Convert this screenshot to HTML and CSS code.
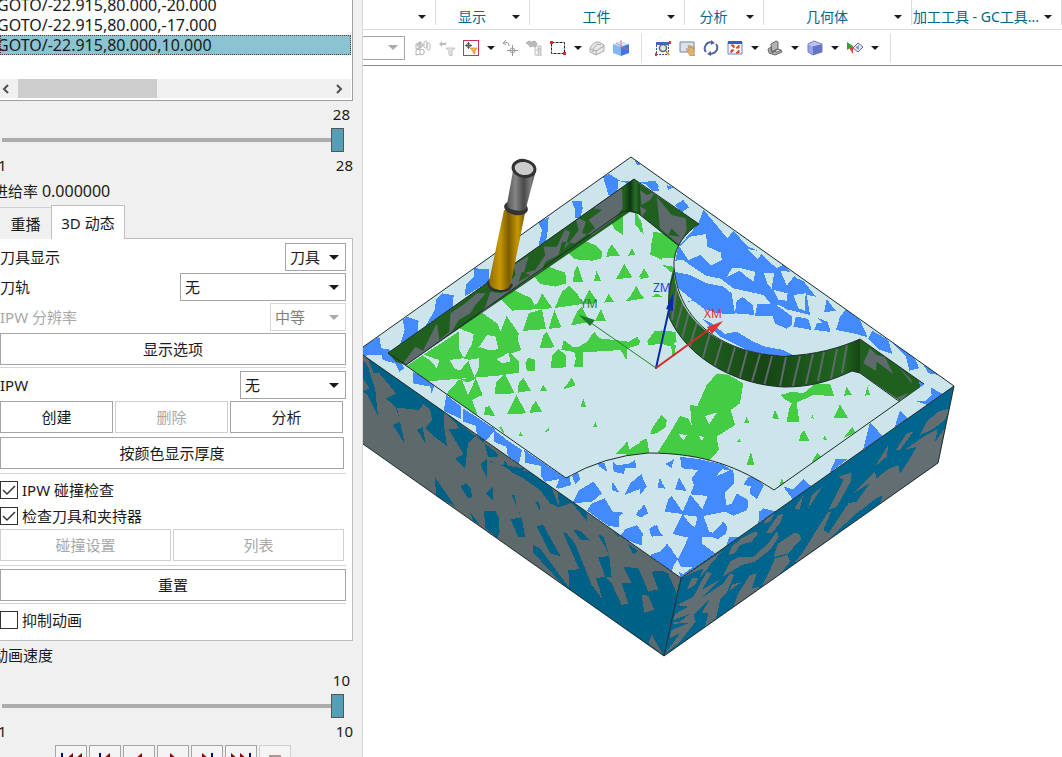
FILE: index.html
```
<!DOCTYPE html>
<html lang="zh-CN">
<head>
    <meta charset="UTF-8">
    <meta name="viewport" content="width=device-width, initial-scale=1.0">
    <title>刀轨可视化</title>
    <link rel="stylesheet" href="styles.css">
</head>
<body>

    <!-- Tool path panel -->
    <aside class="panel">
        <div class="path-box">
            <ul class="path-list">
                <li>GOTO/-22.915,80.000,-20.000</li>
                <li>GOTO/-22.915,80.000,-17.000</li>
                <li class="selected">GOTO/-22.915,80.000,10.000</li>
            </ul>
            <div class="scrollbar">
                <button class="scroll-arrow" aria-label="向左"><svg width="8" height="10" viewBox="0 0 8 10"><path d="M6 1L2 5l4 4"/></svg></button>
                <div class="scroll-track"><div class="scroll-thumb"></div></div>
                <button class="scroll-arrow" aria-label="向右"><svg width="8" height="10" viewBox="0 0 8 10"><path d="M2 1l4 4-4 4"/></svg></button>
            </div>
        </div>

        <div class="slider-block">
            <output class="slider-value">28</output>
            <input type="range" min="1" max="28" value="28" aria-label="运动">
            <div class="slider-ends"><span>1</span><span>28</span></div>
        </div>

        <p class="feed">进给率 <span class="num">0.000000</span></p>

        <div class="tabs">
            <button class="tab">重播</button>
            <button class="tab active">3D 动态</button>
        </div>

        <div class="pane">
            <div class="row">
                <label for="toolShow">刀具显示</label>
                <select id="toolShow" class="w-small"><option>刀具</option></select>
            </div>
            <div class="row">
                <label for="path">刀轨</label>
                <select id="path" class="w-large"><option>无</option></select>
            </div>
            <div class="row disabled">
                <label for="res">IPW 分辨率</label>
                <select id="res" class="w-res" disabled><option>中等</option></select>
            </div>
            <button class="btn">显示选项</button>
            <hr class="tight">
            <div class="row">
                <label for="ipw">IPW</label>
                <select id="ipw" class="w-medium"><option>无</option></select>
            </div>
            <div class="btn-row three">
                <button class="btn">创建</button>
                <button class="btn" disabled>删除</button>
                <button class="btn">分析</button>
            </div>
            <div class="btn-row thick">
                <button class="btn">按颜色显示厚度</button>
            </div>
            <hr>
            <label class="check"><input type="checkbox" checked>IPW 碰撞检查</label>
            <label class="check"><input type="checkbox" checked>检查刀具和夹持器</label>
            <div class="btn-row">
                <button class="btn" disabled>碰撞设置</button>
                <button class="btn" disabled>列表</button>
            </div>
            <hr>
            <button class="btn">重置</button>
            <hr class="tight">
            <label class="check"><input type="checkbox">抑制动画</label>
        </div>

        <p class="speed">动画速度</p>
        <div class="slider-block">
            <output class="slider-value">10</output>
            <input type="range" min="1" max="10" value="10" aria-label="动画速度">
            <div class="slider-ends"><span>1</span><span>10</span></div>
        </div>

        <div class="player">
            <button aria-label="到开头"><svg viewBox="0 0 30 26"><path class="bar" d="M5 7h2v12H5z"/><path d="M17 7v12l-7-6zM26 7v12l-7-6z"/></svg></button>
            <button aria-label="上一步"><svg viewBox="0 0 30 26"><path class="bar" d="M9 7h2v12H9z"/><path d="M20 7v12l-7-6z"/></svg></button>
            <button aria-label="反向播放"><svg viewBox="0 0 30 26"><path d="M18 7v12l-7-6z"/></svg></button>
            <button aria-label="播放"><svg viewBox="0 0 30 26"><path d="M12 7v12l7-6z"/></svg></button>
            <button aria-label="下一步"><svg viewBox="0 0 30 26"><path d="M10 7v12l7-6z"/><path class="bar" d="M19 7h2v12h-2z"/></svg></button>
            <button aria-label="到末尾"><svg viewBox="0 0 30 26"><path d="M5 7v12l7-6zM14 7v12l7-6z"/><path class="bar" d="M23 7h2v12h-2z"/></svg></button>
            <button aria-label="停止" disabled><svg viewBox="0 0 30 26"><path d="M9 9h12v10H9z"/></svg></button>
        </div>
    </aside>

    <main class="work">
        <!-- Ribbon group captions -->
        <nav class="ribbon">
            <div class="group g-first"><span></span><button class="drop" aria-label="更多"></button></div>
            <div class="group g-show"><span>显示</span><button class="drop" aria-label="显示"></button></div>
            <div class="group g-part"><span>工件</span><button class="drop" aria-label="工件"></button></div>
            <div class="group g-analyse"><span>分析</span><button class="drop" aria-label="分析"></button></div>
            <div class="group g-body"><span>几何体</span><button class="drop" aria-label="几何体"></button></div>
            <div class="group g-tools"><span>加工工具 - GC工具...</span><button class="drop" aria-label="加工工具"></button></div>
        </nav>

        <div class="toolbar">
            <select class="combo" aria-label="过滤器" disabled><option></option></select>
            <div class="tools narrow">
                <button class="tool" aria-label="装配"><svg viewBox="0 0 16 16" fill="none" stroke="#b4b4b4"><path d="M1 4l4-1v5L1 9zM1 10l4-1v5l-4 1zM5 9l4 1v4l-4 1M5 1v7M2 5h7"/><circle cx="5" cy="5" r="2.5"/><rect x="9" y="1" width="3" height="7" rx="1.5"/><rect x="12" y="3" width="3" height="7" rx="1.5"/></svg></button>
                <button class="tool" aria-label="重置过滤"><svg viewBox="0 0 16 16"><path d="M3 1L0 4l3 3V5h3q2 0 1-3l-1 1H3z" fill="#bbb"/><path d="M7 8h9l-3 3v5l-3-1v-4z" fill="#e2e2e2" stroke="#c4c4c4"/></svg></button>
                <button class="tool pressed" aria-label="选择过滤"><svg viewBox="0 0 16 16"><g fill="none" stroke="#555"><circle cx="5.500" cy="5.500" r="2"/><path d="M5.500 2v7M2 5.500h7"/></g><path d="M5 5h1v1H5z" fill="#d33"/><path d="M7 8h7l-2 3v3l-2-1v-2z" fill="#f3b83b" stroke="#c08a20" stroke-width=".6"/></svg></button>
                <button class="drop" aria-label="过滤选项"></button>
                <button class="tool" aria-label="移动"><svg viewBox="0 0 16 16" fill="none" stroke="#999"><path d="M7 6q0-5-5-3M4 0L1 3l3 2"/><circle cx="10.500" cy="10.500" r="2.500"/><path d="M10.500 5v11M5 10.500h11"/></svg></button>
                <button class="tool" aria-label="查找"><svg viewBox="0 0 16 16"><path d="M0 3l3-2 2 1 4-1 2 3-1 3-3-1-3 1-1-2z" fill="#bbb" stroke="#999" stroke-width=".6"/><path d="M9 7v8h3M9 10h3" fill="none" stroke="#bbb"/><path d="M12 6h3v3h-3zM12 9h3v3h-3zM12 13h3v3h-3z" fill="#eee" stroke="#bbb"/></svg></button>
                <button class="tool" aria-label="框选"><svg viewBox="0 0 16 16"><path d="M1.500 2.500h13v11h-13z" fill="none" stroke="#222" stroke-dasharray="3 1"/><path d="M0 1h3v3H0zM13 12h3v3h-3z" fill="#d42a2a"/></svg></button>
                <button class="drop" aria-label="选择方式"></button>
                <button class="tool" aria-label="高亮"><svg viewBox="0 0 16 16" fill="#e8e8e8" stroke="#aaa"><path d="M1 8q4-7 9-6l5 3v6l-8 4-6-3z"/><path d="M1 9l6 2 8-5M7 11v4M4 12V9l4-5 4 1" fill="none"/></svg></button>
                <button class="tool" aria-label="着色"><svg viewBox="0 0 16 16"><path d="M0 4l8 2v10l-8-3z" fill="#7fb8f4"/><path d="M8 6l8-2v9l-8 3z" fill="#3b76e1"/><path d="M0 4l8-3 8 3-8 3z" fill="#cfe4fb"/><path d="M8 0v10M3 3l12 7" stroke="#d8708a" stroke-width=".8" fill="none"/></svg></button>
            </div>
            <div class="tools">
                <button class="tool" aria-label="缩放窗口"><svg viewBox="0 0 16 16"><path d="M1 2h13v3H1z" fill="#4662c4"/><path d="M1.500 5v9.500h12V5" fill="none" stroke="#3c50b0" stroke-dasharray="2 1"/><circle cx="8" cy="8" r="3.500" fill="#dbe9ee" stroke="#56656d" stroke-width="1.500"/><path d="M11 11l3 4" stroke="#c49745" stroke-width="2"/><path d="M14 1h2v3h-2zM0 13h2v3H0z" fill="#d33"/></svg></button>
                <button class="tool" aria-label="平移"><svg viewBox="0 0 16 16"><path d="M1 2h14v10H1z" fill="#dbe3ef" stroke="#7583a0"/><path d="M7 8l3 2-1-5 2 3V5l1 3 1-2 1 3 1-2v6l1 3h-5z" fill="#dfb46e" stroke="#b17e3d" stroke-width=".5"/></svg></button>
                <button class="tool" aria-label="旋转"><svg viewBox="0 0 16 16" fill="none" stroke="#53659e" stroke-width="2"><path d="M3 12a6 6 0 0 1 6-9.500M13 4a6 6 0 0 1-6 9.500"/><path d="M8 0l4 3-4 2zM8 11l-4 3 4 2z" fill="#53659e" stroke="none"/></svg></button>
                <button class="tool" aria-label="布局"><svg viewBox="0 0 16 16"><path d="M1 2h14v12H1z" fill="#f5f7ff" stroke="#7181c8"/><path d="M1 1h14v3H1z" fill="#3e5ac8"/><path d="M4 5h3v3zM12 5v3H9zM4 13v-3h3zM12 13H9l3-3z" fill="#e14825" stroke="#e14825"/></svg></button>
                <button class="drop" aria-label="布局选项"></button>
                <button class="tool" aria-label="截面"><svg viewBox="0 0 16 16" fill="#b4b4b4" stroke="#666"><path d="M4 4l5-3 2 1v7l-6 4zM1 9l3-2v4l6 1 4-2 1 2-7 3-6-2z"/><path d="M5 12l5-3 4 1" fill="none"/></svg></button>
                <button class="drop" aria-label="截面选项"></button>
                <button class="tool" aria-label="视图方向"><svg viewBox="0 0 16 16"><path d="M1 4l5 2v9l-5-3z" fill="#98a6e9"/><path d="M6 6l9-2v8l-9 3z" fill="#6375c9"/><path d="M1 4l6-3 8 3-9 2z" fill="#b9c4f4"/><path d="M1 4l6-3 8 3v8l-9 3-5-3z" fill="none" stroke="#7181c8"/></svg></button>
                <button class="drop" aria-label="视图选项"></button>
                <button class="tool" aria-label="显示方式"><svg viewBox="0 0 16 16"><path d="M0 2l6 4-6 4z" fill="#26a53b"/><path d="M2 8l4-2v8z" fill="#e3462f"/><path d="M6 8l5-5 5 4-5 5z" fill="#e5eaf5" stroke="#667" /><path d="M9 7l3-2v5l-3-2z" fill="#8795d6"/></svg></button>
                <button class="drop" aria-label="显示选项"></button>
            </div>
        </div>

        <!-- Machined part -->
        <div class="view">
            <svg class="scene" viewBox="363 66 699 691" preserveAspectRatio="xMinYMin meet" role="img" aria-label="零件三维视图">
                <defs>
                    <clipPath id="cTop"><path d="M363 347L631 157 954 386 681 578 363 355z"/></clipPath>
                    <clipPath id="cFloor"><path d="M388 353L634 179 699 224 680 245 674 267 676 340 700 372 852 386 924 384 774 490C740 468 706 453 648 453Q604 456 566 478z"/></clipPath>
                    <clipPath id="cLeft"><path d="M363 355L681 578 664 656 363 444z"/></clipPath>
                    <clipPath id="cRight"><path d="M681 578L954 386 938 463 664 656z"/></clipPath>
                    <clipPath id="cWall"><path d="M388 353L631 181V211L406 365 396 362z"/></clipPath>
                    <clipPath id="cWall2"><path d="M633 179L699 224Q685 234 679 246L639 214 630 212z"/></clipPath>
                    <clipPath id="cBoss"><path d="M699 224C680 236 673 253 674 273C679 330 735 355 785 356C815 355 840 348 860 339L924 384 954 386 640 163z"/></clipPath>
                    <clipPath id="cBossWall"><path d="M674 267C679 330 735 355 785 356C815 355 840 348 860 339V373L852 371C828 382 810 387 784 387C738 385 688 360 669 317Q666 290 674 267z"/></clipPath>
                    <linearGradient id="gTool"><stop offset="0" stop-color="#8f6b00"/><stop offset=".3" stop-color="#c79800"/><stop offset=".55" stop-color="#7c5d00"/><stop offset=".8" stop-color="#c79800"/><stop offset="1" stop-color="#765800"/></linearGradient>
                    <linearGradient id="gShank"><stop offset="0" stop-color="#555"/><stop offset=".3" stop-color="#858585"/><stop offset=".6" stop-color="#4a4a4a"/><stop offset=".85" stop-color="#7d7d7d"/><stop offset="1" stop-color="#555"/></linearGradient>
                    <linearGradient id="gBoss"><stop offset="0" stop-color="#267025"/><stop offset=".5" stop-color="#174515"/><stop offset=".9" stop-color="#206620"/><stop offset="1" stop-color="#123b11"/></linearGradient>
                    <linearGradient id="gCorner"><stop offset="0" stop-color="#206020"/><stop offset=".4" stop-color="#103510"/><stop offset=".7" stop-color="#287028"/><stop offset="1" stop-color="#174817"/></linearGradient>
                </defs>

                <!-- left side -->
                <g clip-path="url(#cLeft)" class="flat">
                    <path class="side" d="M363 355L681 578 664 656 363 444z"/>
                    <path class="teal" transform="translate(362 340) scale(.3333)" d="M3 60L18 80 32 125 40 150 48 228 15 162 3 155 22 145 3 115z
                        M3 45L248 215 245 250 255 318 215 288 190 265 210 240 205 210 185 192 170 210 105 203 128 310 92 255 115 245 100 200 72 175 102 160 50 97 35 100 20 62z
                        M165 270L182 262 192 312z M248 215L408 342 406 352 378 352 365 298 340 290 318 310 310 385 280 356 305 343 260 268 302 264 308 280z
                        M355 372L375 357 376 416z M425 360L440 378 485 385 485 452 450 430 425 388z
                        M219 412L278 497 222 470z M296 440L310 430 325 443 332 472 318 474z M372 460L392 442 393 480z
                        M366 513L400 513 421 550 406 595 370 565z M323 515L352 552 335 545z"/>
                    <path class="teal" transform="translate(500 480) scale(.3333)" d="M60 175L130 100 540 297 495 530 208 335z"/>
                    <path class="side" transform="translate(500 480) scale(.3333)" d="M0 180L-10 -30 100 -30 130 0 262 100 340 155 420 210 500 272 455 275 475 328 445 335 415 265 370 260 395 310 365 310 385 370 365 375 335 310 315 290 288 295 308 358 275 315 225 190 200 160 190 160 238 268 205 270 160 190 130 135 110 138 150 220 185 230 205 270 208 325 120 205 100 195 100 235 60 180z"/>
                    <path class="teal" transform="translate(500 480) scale(.3333)" d="M-40 -60L100 -20 130 0 190 38 262 100 262 125 215 68 178 82 150 70 120 30 70 -5z M32 118L65 112 75 172 55 172z M105 65L118 68 120 92z M35 45L45 45 48 72 65 112z M220 150L240 152 272 182 240 178z M295 232L328 228 335 290 315 290z M295 165L310 168 328 228 318 205z M340 155L360 168 355 172z M385 193L415 212 400 223z"/>
                    <path class="side" transform="translate(500 480) scale(.3333)" d="M165 50L178 82 172 28 155 25z M425 345L445 347 463 390 433 398z M455 465L490 525 445 490z M500 270L540 297 530 340z M-20 -60L30 -30 50 0 -20 0z"/>
                </g>

                <!-- right side -->
                <g clip-path="url(#cRight)" class="flat">
                    <path class="teal2" d="M681 578L954 386 938 463 664 656z"/>
                    <path class="side2" transform="translate(640 370) scale(.3333)" d="M860 155L895 125 930 115 915 150 875 180 840 195z
                        M795 240L850 200 893 178 885 215 925 160 896 278 720 400 728 375 705 388 650 430 590 485 545 535 462 580 490 545 530 480 565 425 573 425 550 480 565 490 625 400 650 395 690 340 680 345 640 370 690 320 705 305 710 325 740 300 775 285 780 312 810 265 830 230z
                        M768 240L800 190 820 185 780 240z M705 290L745 225 740 260z M595 320L635 308 632 335 590 410 565 420 610 330z
                        M513 380L550 345 505 415z M463 415L490 375 478 420z"/>
                    <path class="side2" transform="translate(660 490) scale(.3333)" d="M65 265L185 185 150 225 140 240 120 262 130 235 90 252z M205 195L215 170 245 145 285 125 295 130 275 155 240 165 225 190z M310 100L320 85 345 70 330 95z
                        M188 260L210 215 240 200 280 200 325 160 350 125 357 140 330 180 285 215 245 225z M355 75L370 72 360 100 335 130 318 130 330 110z
                        M342 195L355 160 400 130 415 130 425 145 385 190 345 200z M300 300L330 240 345 205 382 195 390 215 365 247z
                        M220 350L235 310 270 255 290 250 275 295 300 290 290 305z M207 303L215 285 247 275z M80 300L95 265 115 265 105 285z
                        M50 345L100 320 140 245 155 250 125 300 180 268 130 320 190 280 210 250 222 255 200 310 182 325 168 385 135 410 145 370 125 370 150 325 100 375 107 395 60 455 15 492 60 430 28 445 35 420 90 398 35 402 95 370 40 390 45 372 85 350z"/>
                    <path class="teal2" transform="translate(660 490) scale(.3333)" d="M38 398L90 370 60 395z"/>
                </g>

                <!-- top face -->
                <g clip-path="url(#cTop)" class="flat">
                    <path class="face" d="M363 347L631 157 954 386 681 578 363 355z"/>
                    <path class="blue" transform="translate(362 150) scale(.3333)" d="M3 590L52 560 58 595 82 598 92 615 118 640 128 655 112 665 100 640 62 630 60 615 3 617z
                        M112 590L128 540 122 510 135 500 170 512 165 565 130 595z M190 530L218 480 222 450 240 430 275 436 272 475 245 500 215 510z
                        M308 440L312 405 335 380 335 355 382 357 380 395z M528 215L560 202 556 255 550 280 530 285 540 240z M628 152L660 153 662 175 655 205 640 205 640 180z
                        M723 80L742 72 768 88 766 130 740 137z M817 27L840 42 825 46z M762 90L830 98 880 92 892 112 868 116 872 102 790 98z M152 665L190 685 220 700 208 732 205 710 152 700z"/>
                    <path class="blue" transform="translate(362 340) scale(.3333)" d="M253 165L298 200 298 238 245 212z M303 205L400 268 375 300 345 295 342 258 303 245z
                        M397 270L435 300 480 330 470 375 437 345 433 320 395 305z M487 330L610 414 550 425 537 410 537 378 490 368z
                        M582 442L595 412 612 410 620 400 628 435 590 446z M630 408L648 397 655 418 640 432z M630 490L652 450 695 425 720 460 690 485z
                        M675 512L690 490 728 475 752 515 785 518 770 530 772 562 740 558z M700 362L728 370 736 395 712 380z M752 362L765 375 800 372 820 360 822 385 790 385 785 402 755 395z
                        M787 465L805 430 838 402 853 440z M752 425L772 458 750 450z M822 525L830 510 842 510 845 492 858 520 838 532z M773 590L790 568 825 555 842 580 840 617 812 607z
                        M863 582L868 562 885 556 900 588z M887 442L893 415 910 446z M910 510L918 480 930 468 930 518z M865 648L890 640 915 612 930 628 930 695z M910 372L930 362 930 384z"/>
                    <path class="blue" transform="translate(640 370) scale(.3333)" d="M0 312L20 350 0 375z M52 352L60 325 75 356z M105 358L117 322 140 363z M80 285L102 267 95 292z
                        M120 260L180 268 245 283 280 302 283 340 255 368 258 405 275 402 290 370 325 390 322 420 280 437 255 425 190 438 208 485 218 488 250 455 262 470 258 492 232 508 215 500 185 500 185 520 225 550 120 625 113 570 145 503 98 492 128 432 75 425 95 378 128 425 150 375 162 345 155 325 175 300 125 295z
                        M30 555L60 545 82 522 118 572 95 600 70 570z M28 478L45 465 68 497 35 500z M0 420L12 402 25 430 0 442z M310 345L325 320 345 322 372 345 350 388 330 370 332 348z
                        M355 458L358 425 370 415 408 425z M430 350L460 358 490 328 516 350 460 390z M568 310L587 267 622 268z M670 238L690 157 728 198z M763 175L780 122 805 145z M822 92L858 92 875 75 872 52 908 72 862 105z M258 528L268 500 300 500z M395 350L412 350 403 360z"/>
                    <path class="face" transform="translate(640 370) scale(.3333)" d="M150 373L203 378 187 417z M130 435L173 440 165 472 148 460z M228 320L245 298 270 300z M100 590L112 568 122 590 160 590 130 612 100 600z"/>
                </g>

                <!-- pocket floor -->
                <g clip-path="url(#cFloor)" class="flat">
                    <path class="face" d="M380 170h560v330H380z"/>
                    <path class="green" transform="translate(362 150) scale(.3333)" d="M610 300L655 268 700 285 722 305 718 325 690 332 640 328z M733 320L738 300 750 283 774 318z M798 317L810 293 821 315z
                        M742 208L775 192 783 195 782 255 758 238z M820 185L838 215 845 252 820 225z M865 312L870 265 900 248 900 330z
                        M515 378L545 345 610 368 613 400 580 410 535 402z M632 395L638 362 646 345 664 396z M696 392L704 362 717 392z M762 388L787 342 811 382z M831 382L846 354 862 382z
                        M413 445L450 417 508 445 518 465 528 458 540 430 572 475 450 482z M578 474L600 425 622 407 645 430 662 462z M662 460L682 418 706 455 690 462z M726 458L740 431 755 455z
                        M788 455L805 438 823 408 835 430 848 445z M870 440L885 430 900 440z M483 543L500 490 540 478 552 537z M560 537L577 480 598 532z M626 527L645 485 660 470 683 515z M700 512L717 477 731 512z
                        M532 595L545 555 555 545 578 592z M133 648L290 545 310 488 360 488 408 522 415 545 434 498 470 550 468 570 478 600 448 610 472 635 472 668 400 678 345 682 200 694z
                        M490 640L500 622 518 630 518 662 495 662z M567 655L570 615 590 598 612 615 612 652z M598 600L605 570 632 590 650 590 675 575 697 545 712 565 800 575 825 560 835 575 830 585 780 600 650 608z
                        M635 652L642 625 635 600 662 605 663 652z M775 598L797 595 793 632z M856 575L870 555 900 540 900 582 860 585z"/>
                    <path class="face" transform="translate(362 150) scale(.3333)" d="M290 535L335 552 330 582 306 625 292 600z M262 630L303 625 322 630 295 660 280 658z M318 630L350 625 352 650 338 682z M345 600L375 555 400 560 410 598 380 600 350 590z M405 628L440 608 445 635 420 640z M170 608L215 625 232 630 225 655 205 632z"/>
                    <path class="green" transform="translate(362 340) scale(.3333)" d="M250 165L290 120 340 110 362 165 330 180 348 228 300 195z M398 163L402 128 428 100 458 160z M467 158L470 130 485 115 507 152z M535 152L543 134 555 152z M603 148L618 130 628 112 642 136z
                        M435 223L463 165 493 220z M503 218L510 198 521 183 541 216z M366 225L370 202 382 198 400 228z M410 260L420 262 430 288z M656 200L664 176 673 200z M692 262L700 246 706 260z M545 278L562 260 562 272z M470 287L475 276 483 287z
                        M865 280L872 262 898 225 915 240 908 265z M760 342L796 305 802 328 855 295 862 338 820 345z M887 340L930 275 930 342z"/>
                    <path class="face" transform="translate(362 340) scale(.3333)" d="M300 120L318 128 342 115 318 165z"/>
                    <path class="green" transform="translate(640 370) scale(.3333)" d="M50 252L80 205 120 138 145 145 155 165 150 105 172 108 200 45 240 0 310 40 300 100 272 120 285 165 230 200 237 240 205 273 130 258z
                        M30 192L40 170 65 138 80 150 78 170 50 190z M0 215L18 205 25 248 0 246z M396 145L405 118 417 147z M313 158L320 140 327 158z
                        M440 155L448 115 455 100 430 85 422 75 455 65 490 70 525 42 570 42 583 78 520 75 470 98 478 155z M582 143L600 103 624 143z M477 213L482 192 493 182 508 212z M548 208L554 197 562 210z
                        M612 77L620 50 636 75z M675 77L683 50 690 75z M513 145L517 135 522 146z M320 285L333 245 343 285z M515 278L532 247 545 262z M610 205L637 170 645 187z M418 348L425 325 434 345z M660 5L690 25 706 40 685 48z M292 215L300 205 302 216z"/>
                    <path class="face" transform="translate(640 370) scale(.3333)" d="M195 138L232 127 208 162z M115 192L143 195 130 210z M177 199L195 200 185 212z"/>
                    <path class="green" transform="translate(640 150) scale(.3333)" d="M30 315L35 288 40 245 80 252 118 290 110 325 60 325z M0 387L12 355 28 382z M0 205L10 250 0 245z M20 575L45 542 105 545 122 565 90 590 60 580z M93 580L107 585 105 620 96 615z M68 345L100 350 98 370z"/>
                </g>
                <path class="edge" d="M388 353L566 478Q604 456 648 453C706 453 740 468 774 490L924 384"/>

                <!-- pocket walls -->
                <g clip-path="url(#cWall)">
                    <path class="wall" d="M380 170h260v200H380z"/>
                    <path class="stone" transform="translate(362 150) scale(.3333)" d="M120 645L160 590 183 602 225 520 232 570 262 545 265 490 310 460 345 430 372 430 340 465 325 490 290 510 270 545 205 600 140 650z
                        M325 525L370 470 385 425 420 430 460 375 455 345 500 318 485 370 520 360 550 315 545 290 585 290 608 240 625 245 605 300 650 240 640 200 672 215 660 250 690 255 760 205 782 175 780 115 728 135 695 175 720 180 680 210 700 235 640 280 600 275 590 315 550 335 540 360 450 420 400 455z"/>
                    <path class="wall" transform="translate(362 150) scale(.3333)" d="M490 365L520 310 535 320 512 355z M560 335L605 305 590 325z M470 395L480 365 505 375z"/>
                </g>
                <g clip-path="url(#cWall2)">
                    <path class="wall" d="M625 175h80v75h-80z"/>
                    <path class="stone" transform="translate(640 150) scale(.3333)" d="M0 120L20 135 45 125 30 150 5 165z M50 140L95 195 138 205 140 240 118 285 60 235z M0 170L20 180 5 200z"/>
                    <path class="wall" transform="translate(640 150) scale(.3333)" d="M85 255L95 235 120 260z"/>
                </g>
                <path fill="url(#gCorner)" d="M626 184L634 179 640 184V214L631 211 624 212z"/>
                <path class="wall" d="M860 339L924 384Q914 391 900 401L860 373z"/>
                <path class="stone" transform="translate(640 150) scale(.3333)" d="M670 640L690 595 710 615 735 622 760 672 710 635 708 662z M768 745L805 728 785 750z M775 650L815 690 815 700z"/>
                <g clip-path="url(#cBossWall)">
                    <path fill="url(#gBoss)" d="M664 260h200v130H664z"/>
                    <path class="rib" d="M677 288l-5 32M683 302l-7 26M689 312l-7 26M697 322l-8 27M710 333l-8 28M722 341l-8 27M735 347l-8 28M747 351l-8 30M760 354l-9 31M772 356l-8 30M786 357l-6 30M800 356l-7 30M813 354l-7 30M824 352l-6 29M837 349l-6 30M847 345l-5 28"/>
                </g>
                <g clip-path="url(#cBoss)" class="flat">
                    <path class="face" d="M670 165h290v230H670z"/>
                    <path class="blue" transform="translate(640 150) scale(.3333)" d="M190 178L262 265 280 243 325 290 350 300 410 355 430 345 470 385 490 393 528 440 500 435 510 495 440 478 418 465 400 468 370 435 280 415 240 385 200 378 150 345 130 330 106 332 115 290 175 222z
                        M103 365L150 375 200 400 250 410 275 430 285 492 230 490 190 475 160 452 130 460 158 450 115 415z M285 490L290 452 308 441 338 465 343 495z M345 497L352 463 400 460 430 480 457 500 455 525 440 537 405 520 398 498z
                        M460 530L468 500 505 507 515 540z M523 540L530 520 545 518 535 505 562 515 572 546z M588 540L600 500 618 478 660 510 683 562 640 550z M552 487L560 447 587 482z
                        M190 508L215 520 240 540 255 552 290 545 340 575 375 590 430 600 460 615 400 615 330 605 240 560z M697 542L745 570 757 612 720 600 685 565z M757 578L820 615 838 655 808 662 798 620z M848 640L898 675 865 670z"/>
                    <path class="face" transform="translate(640 150) scale(.3333)" d="M118 290L150 260 198 252 202 290 243 308 245 330 212 347 182 315 145 330z M262 380L275 355 300 354 345 365 342 395 320 380 298 362z M372 370L402 370 395 417 382 400z M422 363L472 367 440 407z M400 420L443 430 440 452 415 450z M460 435L497 430 494 482 475 475z M325 298L370 305 352 328z"/>
                </g>
                <path class="blue flat" transform="translate(640 150) scale(.3333)" d="M105 165L130 150 147 172 125 187z M12 97L45 92 57 122 35 122z M80 105L100 112 85 120z M835 690L853 702 842 712z"/>

                <!-- model edges -->
                <path class="edge" d="M363 347L631 157 954 386 938 463 664 656 363 444M363 355L681 578 954 386M681 578L664 656"/>
                <path class="edge" d="M406 365L388 353 634 179 699 224C680 236 673 253 674 267C679 330 735 355 785 356C815 355 840 348 860 339L924 384M406 365L622 212Q631 209 639 214L679 246M674 273Q667 290 669 317C688 360 738 385 784 387C810 387 828 382 852 371L860 373 900 402"/>

                <!-- cutting tool -->
                <g class="cutter">
                    <ellipse cx="499.500" cy="284" rx="12" ry="7" transform="rotate(10 499.500 284)" fill="#333"/>
                    <path fill="url(#gTool)" d="M504 210L525 213 511 283Q509 291 499 290 489 288 489 282z"/>
                    <path class="ring" d="M488 281Q488 291 499 291 510 292 512 284"/>
                    <ellipse cx="516" cy="208" rx="12" ry="7" transform="rotate(10 516 208)" fill="#333"/>
                    <path fill="url(#gShank)" d="M513 171L535 174 526 208Q524 212 514 210 507 209 507 204z"/>
                    <ellipse class="cap" cx="524" cy="168.500" rx="11" ry="8" transform="rotate(10 524 168.500)"/>
                </g>

                <!-- machine axes -->
                <g class="axes">
                    <path d="M656 368L581 316" stroke="#238523"/>
                    <path d="M579 315L595 320 590 326z" fill="#1b7a28"/>
                    <path d="M656 368L670 305" stroke="#0b2aa8" stroke-width="2"/>
                    <path d="M673 293L673 311 666 309z" fill="#0b2aa8"/>
                    <path d="M656 368L711 328" stroke="#d82828" stroke-width="2"/>
                    <path d="M723 321L712 334 707 327z" fill="#e03434"/>
                    <text x="580" y="308" fill="#2e7a3a">YM</text>
                    <text x="653" y="292" fill="#1c44e0">ZM</text>
                    <text x="704" y="318" fill="#e02f3a">XM</text>
                </g>
            </svg>
        </div>
    </main>

</body>
</html>
```
FILE: styles.css
```
* {
    box-sizing: border-box;
}

body {
    margin: 0;
    height: 100vh;
    display: flex;
    overflow: hidden;
    background: #fff;
    color: #1a1a1a;
    font-family: "Noto Sans", "Noto Sans CJK SC", sans-serif;
    font-size: 15px;
    line-height: 20px;
}

button, select, input {
    font: inherit;
    color: inherit;
    margin: 0;
}

p, ul {
    margin: 0;
    padding: 0;
    list-style: none;
}

/* Left panel */
.panel {
    flex: 0 0 363px;
    height: 100vh;
    padding-right: 9px;
    overflow: hidden;
    background: #f0f0f0;
    border-right: 1px solid #d8d8d8;
}

.path-box {
    height: 101px;
    overflow: hidden;
    display: flex;
    flex-direction: column;
    justify-content: flex-end;
    background: #fff;
    border-right: 1px solid #a0a0a0;
    border-bottom: 1px solid #a0a0a0;
    padding: 0 1px 2px 0;
}

.path-list {
    flex-shrink: 0;
    padding-bottom: 24px;
    font-size: 16px;
    text-indent: -3px;
    white-space: nowrap;
}

.path-list .selected {
    background: #8bc3d1;
    outline: 1px dotted #5a3a2c;
    outline-offset: -1px;
}

.scrollbar {
    display: flex;
    flex-shrink: 0;
    height: 19px;
    background: #f0f0f0;
}

.scroll-arrow {
    width: 18px;
    padding: 0 4px 0 2px;
    border: 0;
    background: none;
    display: flex;
    align-items: center;
}

.scroll-arrow path {
    fill: none;
    stroke: #505050;
    stroke-width: 2;
}

.scroll-track {
    flex: 1;
}

.scroll-thumb {
    width: 44%;
    height: 100%;
    background: #cdcdcd;
}

.slider-block {
    padding-top: 3px;
}

.slider-value {
    display: block;
    text-align: right;
    padding-right: 3px;
}

.slider-block input {
    appearance: none;
    display: block;
    width: calc(100% - 11px);
    height: 24px;
    margin: 4px 0 3px 2px;
    background: linear-gradient(#acacac, #acacac) center / 100% 4px no-repeat;
}

.slider-block input::-webkit-slider-thumb {
    appearance: none;
    width: 13px;
    height: 24px;
    background: #549fb7;
    border: 1px solid #555;
}

.slider-ends {
    display: flex;
    justify-content: space-between;
    margin-left: -2px;
}

.feed {
    padding-top: 6px;
    margin-left: -7px;
}

.num {
    font-size: 16px;
}

/* Tabs */
.tabs {
    display: flex;
    align-items: flex-end;
    height: 34px;
    margin-top: 4px;
}

.tab {
    height: 32px;
    width: 51px;
    padding: 0;
    border: 0;
    border-top: 1px solid #d0d0d0;
    background: #f0f0f0;
}

.tab.active {
    position: relative;
    height: 34px;
    width: 74px;
    background: #fff;
    border: 1px solid #c0c0c0;
    border-bottom: 0;
}

.pane {
    margin-top: -1px;
    height: 403px;
    padding: 4px 6px 0 0;
    background: #fff;
    border: 1px solid #bdbdbd;
    border-left: 0;
}

.row {
    display: flex;
    justify-content: space-between;
    align-items: center;
    height: 28px;
    margin-bottom: 2px;
}

.row.disabled label {
    color: #a8a8a8;
}

select {
    appearance: none;
    height: 28px;
    padding: 0 4px;
    border: 1px solid #a5a5a5;
    border-radius: 0;
    background: #fff url("data:image/svg+xml,%3Csvg xmlns='http://www.w3.org/2000/svg' width='10' height='5'%3E%3Cpath d='M0 0h10L5 5z' fill='%231a1a1a'/%3E%3C/svg%3E") right 6px center no-repeat;
}

select:disabled {
    opacity: 1;
    color: #808080;
    border-color: #d8d8d8;
    background-image: url("data:image/svg+xml,%3Csvg xmlns='http://www.w3.org/2000/svg' width='10' height='5'%3E%3Cpath d='M0 0h10L5 5z' fill='%23aaaaaa'/%3E%3C/svg%3E");
}

.w-small { width: 61px; }
.w-large { width: 166px; }
.w-res { width: 76px; }
.w-medium { width: 106px; }

.btn {
    flex: 1;
    display: block;
    width: 100%;
    height: 32px;
    padding: 0;
    border: 1px solid #a5a5a5;
    background: #fff;
}

.btn:disabled {
    color: #a8a8a8;
    border-color: #d0d0d0;
}

.btn-row {
    display: flex;
    gap: 2px;
    padding-right: 2px;
}

.btn-row.three {
    padding-right: 3px;
}

.btn-row.thick {
    margin-top: 4px;
}

hr {
    height: 1px;
    margin: 4px 0 3px;
    border: 0;
    background: #d4d4d4;
}

hr.tight {
    margin: 2px 0 3px;
}

.check {
    display: flex;
    align-items: center;
    gap: 4px;
    height: 26px;
}

.check input {
    appearance: none;
    width: 18px;
    height: 18px;
    border: 1px solid #333;
    background: #fff;
}

.check input:checked {
    background: url("data:image/svg+xml,%3Csvg xmlns='http://www.w3.org/2000/svg' width='16' height='16'%3E%3Cpath d='M2 8l4 4 8-8' fill='none' stroke='%23333' stroke-width='1.500'/%3E%3C/svg%3E") center no-repeat;
}

.speed {
    margin: 4px 0 0 -7px;
}

.speed + .slider-block {
    padding-top: 5px;
}

.player {
    display: flex;
    gap: 2px;
    padding: 4px 0 0 55px;
}

.player button {
    width: 32px;
    height: 28px;
    padding: 0;
    border: 1px solid #a5a5a5;
    background: #f4f4f4;
}

.player button:disabled {
    border-color: #d0d0d0;
}

.player svg {
    display: block;
    fill: #8b0000;
}

.player .bar {
    fill: #00008b;
}

.player button:disabled svg {
    fill: #b09498;
}

/* Ribbon and toolbar */
.work {
    flex: 1;
    min-width: 0;
    display: flex;
    flex-direction: column;
}

.ribbon {
    display: flex;
    height: 30px;
    padding-bottom: 4px;
    border-bottom: 1px solid #dcdcdc;
}

.group {
    display: flex;
    align-items: flex-end;
    min-width: 0;
    padding-right: 9px;
    border-right: 1px solid #dcdcdc;
    color: #00668a;
    font-size: 14px;
    white-space: nowrap;
}

.group span {
    flex: 1;
    padding-right: 4px;
    line-height: 16px;
    text-align: center;
}

.g-first { flex: 63 0 0; }
.g-show { flex: 84 0 0; }
.g-part { flex: 145 0 0; }
.g-analyse { flex: 69 0 0; }
.g-body { flex: 138 0 0; }
.g-tools { flex: 140 0 0; }

.drop {
    width: 8px;
    height: 16px;
    padding: 0;
    border: 0;
    background: url("data:image/svg+xml,%3Csvg xmlns='http://www.w3.org/2000/svg' width='8' height='4'%3E%3Cpath d='M0 0h8L4 4z' fill='%231a1a1a'/%3E%3C/svg%3E") center no-repeat;
}

.toolbar {
    display: flex;
    align-items: center;
    height: 36px;
    border-bottom: 1px solid #8a8a8a;
}

.combo {
    width: 42px;
    height: 24px;
    border-color: #a5a5a5;
    border-left: 0;
}

.combo:disabled {
    border-color: #a5a5a5;
}

.tools {
    display: flex;
    align-items: center;
    height: 28px;
    padding: 0 7px 0 9px;
    border-right: 1px solid #dcdcdc;
}

.tools.narrow {
    padding: 0 8px 0 6px;
}

.tools .drop {
    width: 16px;
}

.tools.narrow .drop {
    width: 15px;
}

.tool {
    width: 24px;
    height: 24px;
    padding: 4px;
    border: 0;
    background: none;
}

.tool svg {
    display: block;
    width: 16px;
    height: 16px;
}

.tool.pressed {
    width: 16px;
    height: 16px;
    margin: 0 4px;
    padding: 0;
    outline: 1px solid #c8324a;
    outline-offset: -1px;
}

/* Graphics view */
.view {
    flex: 1;
    min-height: 0;
}

.scene {
    display: block;
    width: 100%;
    height: 100%;
}

.flat { shape-rendering: crispEdges; }
.face { fill: #cce5ea; }
.blue { fill: #448aff; }
.green { fill: #44cc44; }
.side { fill: #5e696b; }
.teal { fill: #006187; }
.side2 { fill: #626e71; }
.teal2 { fill: #00658d; }
.wall { fill: #20601f; }
.stone { fill: #5f6a6d; }

.rib {
    fill: none;
    stroke: #5f6a6d;
    stroke-width: 2;
}

.edge {
    fill: none;
    stroke: #1e2a2c;
    stroke-width: 1;
}

.ring {
    fill: none;
    stroke: #333;
    stroke-width: 2;
}

.cap {
    fill: #ccc;
    stroke: #333;
    stroke-width: 3;
}

.axes path {
    stroke-linecap: round;
}

.axes text {
    font-size: 12px;
}
```
